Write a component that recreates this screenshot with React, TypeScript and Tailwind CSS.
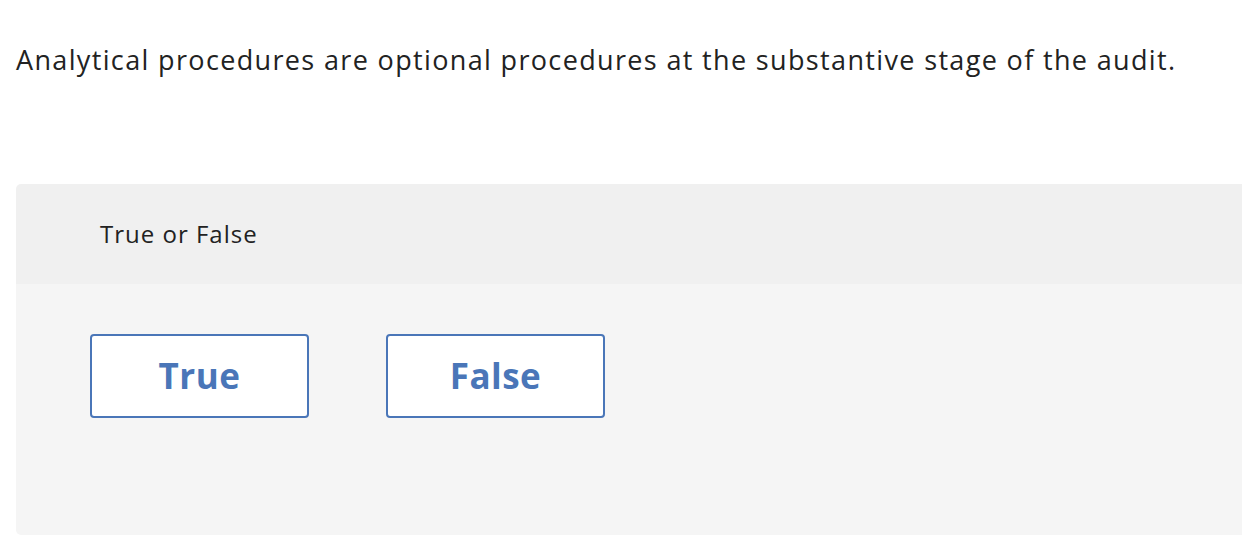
export default function App() {
  return (
    <div className="w-[1242px] h-[538px] overflow-hidden bg-white" style={{ fontFamily: "'Open Sans', sans-serif" }}>
      <div className="pl-[16px] pt-[40px]">
        <p className="text-[27px] leading-[40px] tracking-[1.35px] text-[#222] whitespace-nowrap">
          Analytical procedures are optional procedures at the substantive stage of the audit.
        </p>
      </div>
      <div className="ml-[16px] mt-[104px] w-[1240px] rounded-[5px] overflow-hidden">
        <div className="h-[100px] bg-[#f0f0f0] flex items-center pl-[84px]">
          <span className="text-[24px] tracking-[1px] text-[#222]">True or False</span>
        </div>
        <div className="h-[251px] bg-[#f5f5f5] pl-[74px] pt-[50px] flex gap-[77px] items-start">
          <button className="w-[219px] h-[84px] bg-white border-2 border-[#4a76b8] rounded-[4px] text-[35px] tracking-[0.5px] font-bold text-[#4a76b8]">True</button>
          <button className="w-[219px] h-[84px] bg-white border-2 border-[#4a76b8] rounded-[4px] text-[35px] tracking-[0.5px] font-bold text-[#4a76b8]">False</button>
        </div>
      </div>
    </div>
  );
}
